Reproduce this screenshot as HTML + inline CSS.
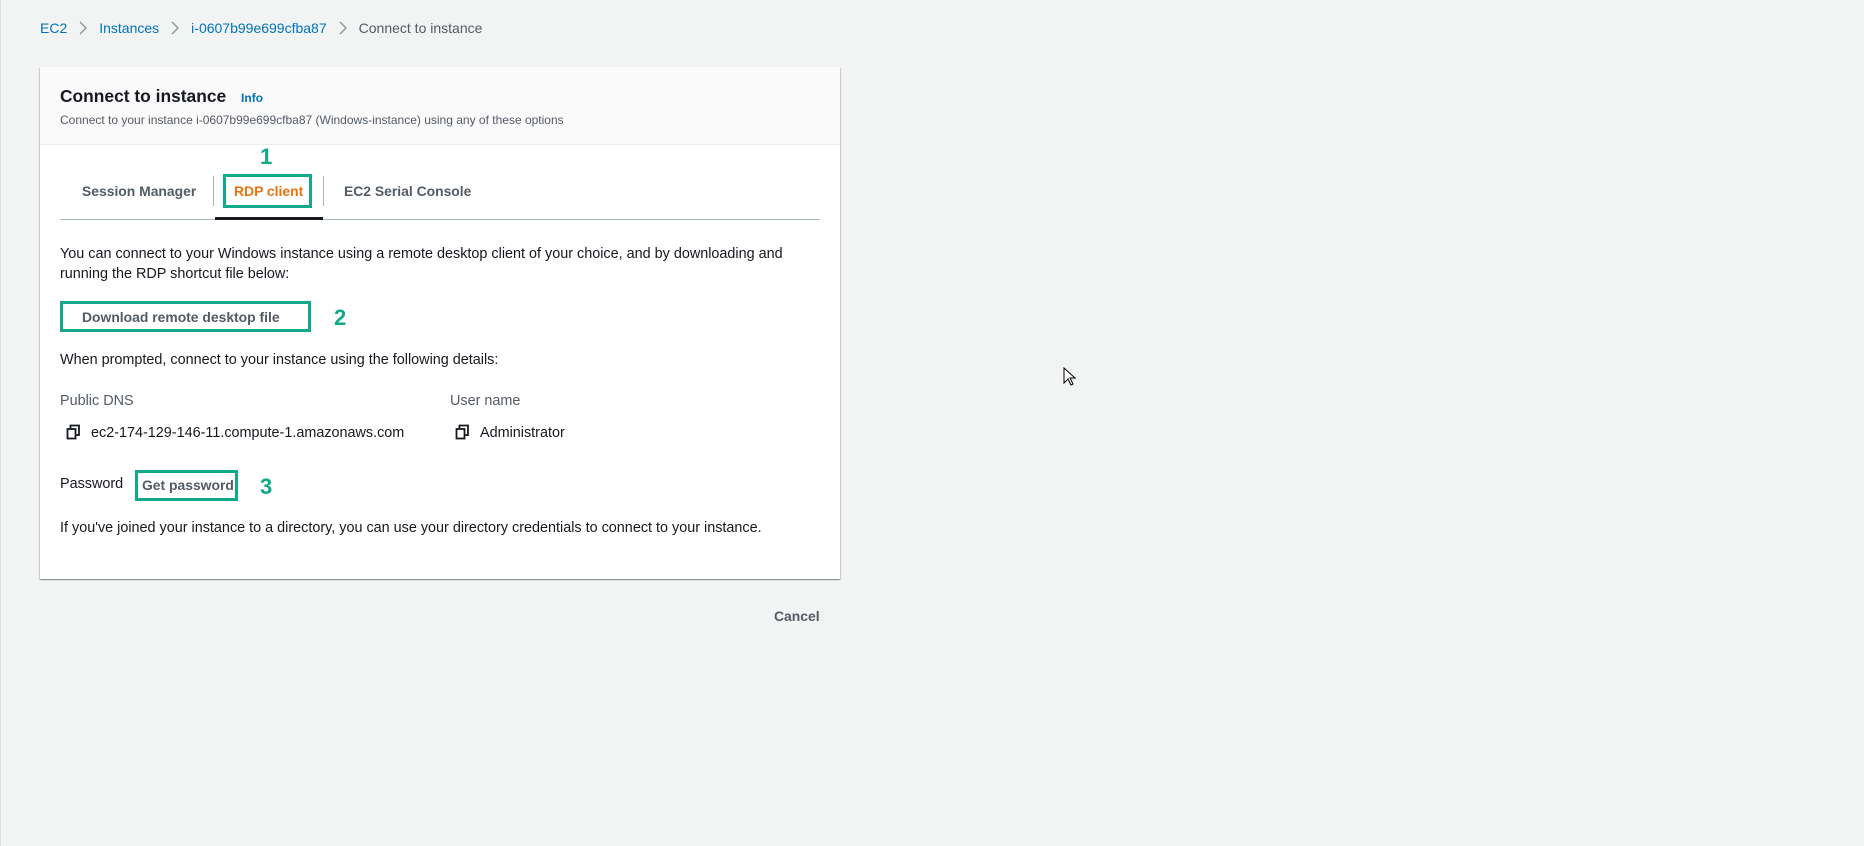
<!DOCTYPE html>
<html><head><meta charset="utf-8"><style>
*{margin:0;padding:0;box-sizing:border-box}
body{width:1864px;height:846px;background:#f2f3f3;font-family:"Liberation Sans",sans-serif;color:#16191f;position:relative;overflow:hidden;border-left:1px solid #e0e0e0}
.a{position:absolute;white-space:nowrap}
.bc{top:20px;font-size:14px;color:#0073bb}
.sep{display:inline-block;vertical-align:-3px;margin:0 11px}
.panel{position:absolute;left:39px;top:67px;width:800px;height:512px;background:#fff;box-shadow:0 1px 1px 0 rgba(0,28,36,.3),1px 1px 1px 0 rgba(0,28,36,.15),-1px 1px 1px 0 rgba(0,28,36,.15)}
.hdr{position:absolute;left:0;top:0;width:800px;height:78px;background:#fafafa;border-bottom:1px solid #eaeded}
.teal{border:3px solid #10a98a}
.num{color:#10a98a;font-weight:bold;font-size:22px}
.t{font-size:14.4px}
.b{font-size:13.9px;font-weight:bold;color:#545b64}
.g{color:#545b64}
</style></head><body>
<div class="a bc" style="left:39px">EC2<svg class="sep" width="10" height="16" viewBox="0 0 10 16"><path d="M2 2l6 6-6 6" fill="none" stroke="#879596" stroke-width="1.3"/></svg>Instances<svg class="sep" width="10" height="16" viewBox="0 0 10 16"><path d="M2 2l6 6-6 6" fill="none" stroke="#879596" stroke-width="1.3"/></svg>i-0607b99e699cfba87<svg class="sep" width="10" height="16" viewBox="0 0 10 16"><path d="M2 2l6 6-6 6" fill="none" stroke="#879596" stroke-width="1.3"/></svg><span style="color:#545b64">Connect to instance</span></div>
<div class="panel">
 <div class="hdr">
  <div class="a" style="left:20px;top:19px;font-size:17.4px;font-weight:bold">Connect to instance <span style="font-size:12px;color:#0073bb;margin-left:10px">Info</span></div>
  <div class="a g" style="left:20px;top:46px;font-size:12px">Connect to your instance i-0607b99e699cfba87 (Windows-instance) using any of these options</div>
 </div>
 <div class="a num" style="left:220px;top:77px">1</div>
 <div class="a b" style="left:42px;top:116px">Session Manager</div>
 <div class="a" style="left:173px;top:109px;width:1px;height:30px;background:#aab7b8"></div>
 <div class="a teal" style="left:183px;top:107px;width:89px;height:34px"></div>
 <div class="a b" style="left:194px;top:116px;color:#ec7211">RDP client</div>
 <div class="a" style="left:283px;top:109px;width:1px;height:30px;background:#aab7b8"></div>
 <div class="a b" style="left:304px;top:116px">EC2 Serial Console</div>
 <div class="a" style="left:20px;top:152px;width:760px;height:1px;background:#aab7b8"></div>
 <div class="a" style="left:175px;top:150px;width:108px;height:3px;background:#16191f"></div>
 <div class="a t" style="left:20px;top:177px;line-height:20px">You can connect to your Windows instance using a remote desktop client of your choice, and by downloading and<br>running the RDP shortcut file below:</div>
 <div class="a teal" style="left:20px;top:234px;width:251px;height:31px"></div>
 <div class="a b" style="left:42px;top:242px">Download remote desktop file</div>
 <div class="a num" style="left:294px;top:238px">2</div>
 <div class="a t" style="left:20px;top:285px">When prompted, connect to your instance using the following details:</div>
 <div class="a t g" style="left:20px;top:326px">Public DNS</div>
 <div class="a t g" style="left:410px;top:326px">User name</div>
 <svg class="a" style="left:26px;top:357px" width="15" height="16" viewBox="0 0 15 16" fill="none" stroke="#16191f" stroke-width="1.8"><rect x="1.5" y="5" width="8" height="9.5"/><path d="M4.5 5V1.5h8.5v9.5h-3.5"/></svg>
 <div class="a t" style="left:51px;top:358px">ec2-174-129-146-11.compute-1.amazonaws.com</div>
 <svg class="a" style="left:415px;top:357px" width="15" height="16" viewBox="0 0 15 16" fill="none" stroke="#16191f" stroke-width="1.8"><rect x="1.5" y="5" width="8" height="9.5"/><path d="M4.5 5V1.5h8.5v9.5h-3.5"/></svg>
 <div class="a t" style="left:440px;top:358px">Administrator</div>
 <div class="a t" style="left:20px;top:409px">Password</div>
 <div class="a teal" style="left:95px;top:403px;width:103px;height:31px"></div>
 <div class="a b" style="left:102px;top:410px">Get password</div>
 <div class="a num" style="left:220px;top:407px">3</div>
 <div class="a t" style="left:20px;top:453px">If you've joined your instance to a directory, you can use your directory credentials to connect to your instance.</div>
</div>
<div class="a b" style="left:773px;top:608px">Cancel</div>
<svg class="a" style="left:1062px;top:367px" width="14" height="20" viewBox="0 0 14 20"><path d="M1 1v15l4-4 3 6 2-1-3-6h5z" fill="#fff" stroke="#000" stroke-width="1"/></svg>
</body></html>
